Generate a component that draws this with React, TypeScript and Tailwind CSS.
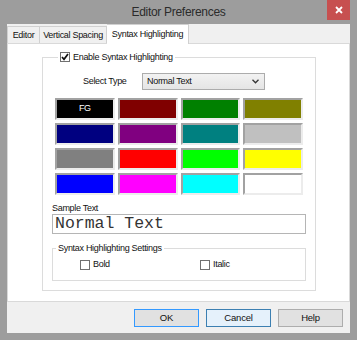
import React from 'react';

const swatches = [
  '#000000', '#800000', '#008000', '#808000',
  '#000080', '#800080', '#008080', '#c0c0c0',
  '#808080', '#ff0000', '#00ff00', '#ffff00',
  '#0000ff', '#ff00ff', '#00ffff', '#ffffff',
];

const CheckBox = ({ checked }: { checked?: boolean }) => (
  <span className="w-[10px] h-[10px] border border-[#707070] bg-white flex items-center justify-center shrink-0">
    {checked && (
      <svg width="8" height="8" viewBox="0 0 8 8">
        <path d="M1 4 L3 6.3 L7 1" stroke="#111" strokeWidth="1.7" fill="none" />
      </svg>
    )}
  </span>
);

const DialogButton = ({ label, variant }: { label: string; variant?: 'default' | 'hot' }) => {
  const look =
    variant === 'default'
      ? 'bg-[#e1e1e1] border-[#3399ff]'
      : variant === 'hot'
      ? 'bg-[#e5f1fb] border-[#3c7fb1]'
      : 'bg-[#e1e1e1] border-[#adadad]';
  return (
    <button className={`w-[65px] h-[18px] border text-[9.5px] tracking-[-0.2px] leading-none text-[#111] flex items-center justify-center ${look}`}>
      {label}
    </button>
  );
};

export default function App() {
  return (
    <div className="w-[357px] h-[340px] bg-[#9d9d9d] flex flex-col font-['Liberation_Sans',Arial,sans-serif] text-[#111] select-none">
      {/* title bar */}
      <div className="h-[24px] flex items-start">
        <div className="w-[30px]" />
        <div className="flex-1 text-center text-[12px] tracking-[-0.3px] leading-[24px] text-[#2b2b2b]">Editor Preferences</div>
        <div className="w-[23px] h-[20px] bg-[#c75050] flex items-center justify-center">
          <svg width="8" height="8" viewBox="0 0 8 8">
            <path d="M1 1 L7 7 M7 1 L1 7" stroke="#fff" strokeWidth="1.8" />
          </svg>
        </div>
        <div className="w-[7px]" />
      </div>

      {/* client area */}
      <div className="flex-1 mx-[7px] mb-[7px] bg-[#f0f0f0] flex flex-col text-[9px] tracking-[-0.3px]">
        {/* tabs */}
        <div className="h-[19px] flex items-end leading-none">
          <div className="w-[33px] h-[17px] border border-b-0 border-[#d0d0d0] bg-[#f0f0f0] flex items-center justify-center">Editor</div>
          <div className="w-[67px] h-[17px] border border-l-0 border-b-0 border-[#d0d0d0] bg-[#f0f0f0] flex items-center justify-center">Vertical Spacing</div>
          <div className="w-[82px] h-[20px] -mb-px border border-l-0 border-b-0 border-[#d0d0d0] bg-white flex items-center justify-center relative z-10">Syntax Highlighting</div>
        </div>

        {/* tab page */}
        <div className="flex-1 bg-white border border-[#d9d9d9] pt-[7px] pl-[34px]">
          <fieldset className="w-[274px] border border-[#dcdcdc] px-[9px] pb-[9px]">
            <legend className="ml-[6px] px-[2px] flex items-center gap-[3px] leading-[12px]">
              <CheckBox checked />
              <span>Enable Syntax Highlighting</span>
            </legend>

            <div className="mt-[10px] h-[17px] flex items-center">
              <span className="ml-[31px] w-[59px]">Select Type</span>
              <div className="w-[123px] h-[17px] border border-[#acacac] bg-gradient-to-b from-[#f2f2f2] to-[#e5e5e5] flex items-center justify-between pl-[4px] pr-[5px]">
                <span>Normal Text</span>
                <svg width="7" height="5" viewBox="0 0 7 5">
                  <path d="M0.5 0.8 L3.5 3.8 L6.5 0.8" stroke="#333" strokeWidth="1.3" fill="none" />
                </svg>
              </div>
            </div>

            <div className="mt-[8px] ml-[3px] w-[248px] grid grid-cols-4 gap-x-[3px] gap-y-[3px]">
              {swatches.map((c, i) => (
                <div
                  key={c}
                  className="h-[22px] border-2 border-t-[#a2a2a2] border-l-[#a2a2a2] border-r-[#ececec] border-b-[#ececec] flex items-center justify-center text-white"
                  style={{ backgroundColor: c }}
                >
                  {i === 0 ? 'FG' : null}
                </div>
              ))}
            </div>

            <div className="mt-[7px] leading-[12px]">Sample Text</div>
            <div className="h-[20px] border border-[#b5b5b5] bg-white flex items-center pl-[2px] font-['Liberation_Mono',monospace] text-[16.5px] tracking-normal text-[#333]">
              Normal Text
            </div>

            <fieldset className="mt-[8px] border border-[#dcdcdc] h-[39px]">
              <legend className="ml-[3px] px-[2px] leading-[12px]">Syntax Highlighting Settings</legend>
              <div className="mt-[4px] flex items-center">
                <div className="ml-[27px] w-[120px] flex items-center gap-[3px]">
                  <CheckBox />
                  <span>Bold</span>
                </div>
                <div className="flex items-center gap-[3px]">
                  <CheckBox />
                  <span>Italic</span>
                </div>
              </div>
            </fieldset>
          </fieldset>
        </div>

        {/* buttons */}
        <div className="h-[31px] flex items-center justify-end gap-[7px] pr-[7px] pt-[1px]">
          <DialogButton label="OK" variant="default" />
          <DialogButton label="Cancel" variant="hot" />
          <DialogButton label="Help" />
        </div>
      </div>
    </div>
  );
}
